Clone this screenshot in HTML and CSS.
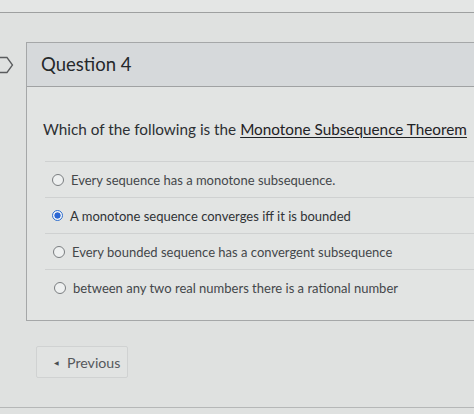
FILE: index.html
```html
<!DOCTYPE html>
<html>
<head>
<meta charset="utf-8">
<link rel="stylesheet" href="styles.css">
</head>
<body>
<div class="topbar"></div>
<div class="page">
  <div class="qrow">
    <div class="gutter">
      <svg class="flag" width="14" height="18" viewBox="0 0 14 18"><polygon points="-6,1.5 7,1.5 12.5,9 7,16.5 -6,16.5" fill="none" stroke="#5a5c5e" stroke-width="1.3"/></svg>
    </div>
    <div class="card">
      <div class="card-head">Question 4</div>
      <div class="card-body">
        <p class="qtext">Which of the following is the <span class="term">Monotone Subsequence Theorem</span></p>
        <ul class="answers">
          <li class="answer"><span class="radio"></span><span>Every sequence has a monotone subsequence.</span></li>
          <li class="answer"><span class="radio checked"></span><span class="sel">A monotone sequence converges iff it is bounded</span></li>
          <li class="answer"><span class="radio"></span><span>Every bounded sequence has a convergent subsequence</span></li>
          <li class="answer"><span class="radio"></span><span>between any two real numbers there is a rational number</span></li>
        </ul>
      </div>
    </div>
  </div>
  <div class="nav">
    <button class="prev"><span class="tri">&#9664;</span>Previous</button>
  </div>
</div>
<div class="bottomline"></div>
</body>
</html>
```
FILE: styles.css
```css
html, body {
  margin: 0;
  padding: 0;
}
body {
  width: 474px;
  height: 414px;
  overflow: hidden;
  background: #dfe1e0;
  font-family: Lato, "Noto Sans", sans-serif;
  color: #2d3033;
  position: relative;
}
.topbar {
  height: 12px;
  background: #e4e6e5;
  border-bottom: 1px solid #9ea0a0;
}
.page {
  padding-top: 29px;
}
.qrow {
  display: flex;
}
.gutter {
  width: 26px;
  flex: none;
  padding-top: 14px;
}
.flag {
  display: block;
}
.card {
  flex: 1;
  margin-right: -20px;
  border: 1px solid #a5a7a8;
  border-right: none;
  background: #e2e4e3;
  height: 277px;
}
.card-head {
  height: 44px;
  box-sizing: border-box;
  background: #d6d9db;
  border-bottom: 1px solid #a0a2a3;
  padding: 10px 0 0 14px;
  font-size: 18.5px;
  color: #25282b;
}
.card-body {
  padding: 33px 0 0 16px;
}
.qtext {
  margin: 0;
  font-size: 15.3px;
  color: #2d3033;
  white-space: nowrap;
}
.term {
  text-decoration: underline;
  text-underline-offset: 2px;
  color: #1f2225;
}
.answers {
  list-style: none;
  margin: 23px 0 0 2px;
  padding: 0;
}
.answer {
  display: flex;
  align-items: center;
  height: 35px;
  border-top: 1px solid #cfd1d1;
  font-size: 13px;
  color: #44474a;
  padding-left: 7px;
  white-space: nowrap;
}
.answer:nth-child(3) { padding-left: 8px; }
.answer:nth-child(4) { padding-left: 9px; }
.radio {
  width: 10px;
  height: 10px;
  border: 1px solid #7a7d80;
  border-radius: 50%;
  background: #eef0f0;
  margin-right: 7px;
  flex: none;
}
.radio.checked {
  border: 1.5px solid #2f6fcf;
  background: radial-gradient(circle, #2b67d4 0 2.8px, #f2f4f6 3.4px);
  width: 9px;
  height: 9px;
}
.sel {
  color: #303336;
}
.nav {
  padding: 25px 0 0 36px;
}
.prev {
  width: 92px;
  height: 32px;
  background: #e1e3e2;
  border: 1px solid #d0d2d2;
  border-radius: 2px;
  font-family: Lato, "Noto Sans", sans-serif;
  font-size: 14.2px;
  color: #55585b;
  padding: 0 0 0 17px;
  text-align: left;
  display: flex;
  align-items: center;
}
.tri {
  font-size: 6px;
  margin-right: 8px;
  color: #4a4d50;
}
.bottomline {
  position: absolute;
  left: 0;
  top: 407px;
  width: 474px;
  border-top: 1px solid #b5b7b7;
}
```
